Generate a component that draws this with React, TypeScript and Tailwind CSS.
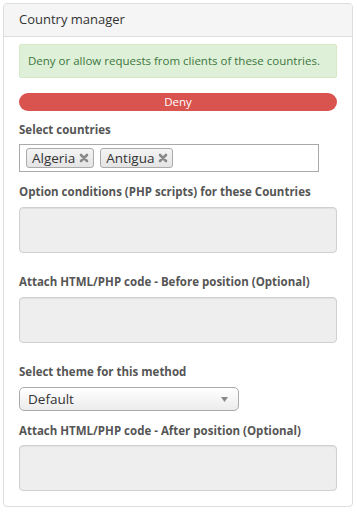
const labelCls = "block text-[11.5px] leading-[16px] font-bold text-[#555]";
const areaCls = "block w-full h-[46px] rounded-[4px] border border-[#d0d0d0] bg-[#eeeeee] shadow-[inset_0_1px_1px_rgba(0,0,0,0.06)]";

function Tag({ name }: { name: string }) {
  return (
    <span className="flex items-center h-[20px] pl-[5px] pr-[4px] gap-[4px] rounded-[3px] border border-[#aaa] bg-gradient-to-b from-[#f4f4f4] to-[#e4e4e4] text-[13.5px] text-[#333]">
      {name}
      <svg width="10" height="10" viewBox="0 0 10 10" className="text-[#888]">
        <path d="M2 2 L8 8 M8 2 L2 8" stroke="currentColor" strokeWidth="2.6" strokeLinecap="round" />
      </svg>
    </span>
  );
}

export default function App() {
  return (
    <div className="p-[3px] pr-[4px] bg-white" style={{ fontFamily: '"Open Sans", "DejaVu Sans", sans-serif' }}>
      <div className="rounded-[4px] border border-[#dddddd] bg-white overflow-hidden">
        <div className="h-[33px] flex items-center px-[15px] bg-[#f5f5f5] border-b border-[#dddddd] text-[13px] text-[#333]">
          Country manager
        </div>
        <div className="px-[15px] pt-[7px] pb-[15px]">
          <div className="h-[34px] flex items-center px-[8px] rounded-[2px] border border-[#d6e9c6] bg-[#dff0d8] text-[11.5px] text-[#3c763d]">
            Deny or allow requests from clients of these countries.
          </div>
          <div className="mt-[15px] h-[18px] flex items-center justify-center rounded-full bg-[#d9534f] text-[11.5px] text-white">
            Deny
          </div>

          <label className={`${labelCls} mt-[11px]`}>Select countries</label>
          <div className="mt-[6px] w-[300px] h-[28px] flex items-center gap-[6px] px-[6px] border border-[#aaa] bg-white">
            <Tag name="Algeria" />
            <Tag name="Antigua" />
          </div>

          <label className={`${labelCls} mt-[12px]`}>Option conditions (PHP scripts) for these Countries</label>
          <div className={`${areaCls} mt-[7px]`} />

          <label className={`${labelCls} mt-[21px]`}>Attach HTML/PHP code - Before position (Optional)</label>
          <div className={`${areaCls} mt-[7px]`} />

          <label className={`${labelCls} mt-[21px]`}>Select theme for this method</label>
          <div className="mt-[7px] w-[220px] h-[24px] flex items-center justify-between pl-[8px] pr-[10px] rounded-[5px] border border-[#aaa] bg-gradient-to-b from-white to-[#ececec] text-[13.5px] text-[#333]">
            <span>Default</span>
            <svg width="7" height="5" viewBox="0 0 7 5">
              <path d="M0 0 L7 0 L3.5 5 Z" fill="#888" />
            </svg>
          </div>

          <label className={`${labelCls} mt-[12px]`}>Attach HTML/PHP code - After position (Optional)</label>
          <div className={`${areaCls} mt-[6px]`} />
        </div>
      </div>
    </div>
  );
}
